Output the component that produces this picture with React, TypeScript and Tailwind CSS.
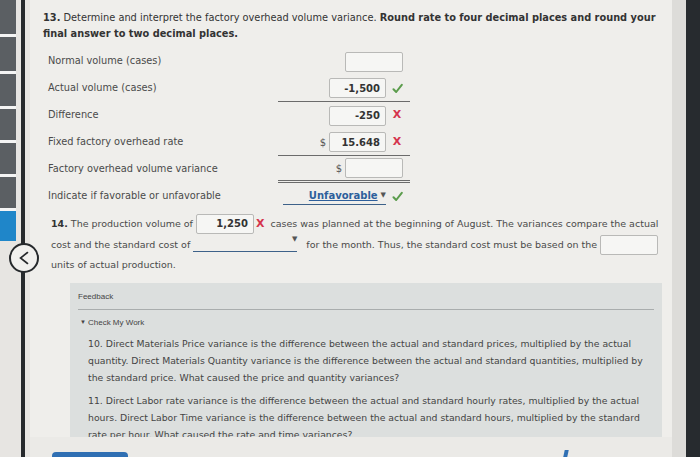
import type { ReactNode } from 'react';

const font = { fontFamily: '"DejaVu Sans", Verdana, sans-serif' };

function Box({ value, wide }: { value?: string; wide?: boolean }) {
  return (
    <span
      className={`flex h-[20px] items-center justify-end rounded-[2px] border border-[#b9b9b7] bg-[#f6f6f4] px-[5px] text-[10px] font-bold text-[#333] ${wide ? 'w-[58px]' : 'w-[57px]'}`}
    >
      {value}
    </span>
  );
}

function Check() {
  return (
    <span className="flex w-[16px] justify-center">
      <svg width="11" height="11" viewBox="0 0 11 11" fill="none" stroke="#5b9c4c" strokeWidth="2" strokeLinecap="round" strokeLinejoin="round">
        <path d="M1.5 6.2 4.2 9 9.8 1.8" />
      </svg>
    </span>
  );
}

function Cross() {
  return <span className="w-[16px] text-center text-[11px] font-bold text-[#d5344d]">X</span>;
}

function Row({
  label,
  line,
  children,
}: {
  label: string;
  line?: 'single' | 'double';
  children?: ReactNode;
}) {
  const border =
    line === 'single'
      ? 'border-b border-[#6b6b6b]'
      : line === 'double'
        ? 'border-b-[3px] border-double border-[#6b6b6b]'
        : '';
  return (
    <div className="flex h-[27px] items-center">
      <span className="w-[235px] pl-[5px] text-[9.8px] text-[#4a4a4a]">{label}</span>
      <span className={`flex h-full w-[132px] items-center justify-end gap-[3px] pr-[5px] ${border}`}>
        {children}
      </span>
    </div>
  );
}

function LeftRail() {
  const tabs = [34, 34, 32, 31, 31, 31];
  return (
    <div className="relative flex w-[30px] shrink-0 bg-[#e7e5e2]">
      <div className="flex w-[16px] flex-col">
        {tabs.map((h, i) => (
          <div key={i} className="flex flex-col">
            <div className="bg-[#5b5f63]" style={{ height: h }} />
            <div className="h-[3px] bg-[#f4f4f4]" />
          </div>
        ))}
        <div className="h-[30px] bg-[#1f86c9]" />
      </div>
      <div className="ml-[5px] w-[4px] bg-[#26292c]" />
      <div className="absolute top-[243px] left-[9px] flex size-[30px] items-center justify-center rounded-full border-[2px] border-[#26292c] bg-[#f1f0ee]">
        <svg width="12" height="14" viewBox="0 0 12 14" fill="none" stroke="#26292c" strokeWidth="1.6" strokeLinecap="round">
          <path d="M9.5 1.5 2.5 7l7 5.5" />
        </svg>
      </div>
    </div>
  );
}

export default function App() {
  return (
    <div className="flex h-[457px] w-[700px] overflow-hidden bg-[#efeeeb]" style={font}>
      <LeftRail />

      <div className="flex w-[642px] shrink-0 flex-col">
        <div className="pt-[10px] pl-[13px] text-[9.8px] leading-[16px] whitespace-nowrap text-[#333]">
          <b>13.</b> Determine and interpret the factory overhead volume variance.{' '}
          <b>Round rate to four decimal places and round your</b>
          <br />
          <b>final answer to two decimal places.</b>
        </div>

        <div className="mt-[6px] ml-[13px] flex flex-col">
          <Row label="Normal volume (cases)">
            <span className="mr-[2px]">
              <Box wide />
            </span>
          </Row>
          <Row label="Actual volume (cases)" line="single">
            <Box value="-1,500" />
            <Check />
          </Row>
          <Row label="Difference">
            <Box value="-250" />
            <Cross />
          </Row>
          <Row label="Fixed factory overhead rate" line="single">
            <span className="text-[10px] text-[#555]">$</span>
            <Box value="15.648" />
            <Cross />
          </Row>
          <Row label="Factory overhead volume variance" line="double">
            <span className="text-[10px] text-[#555]">$</span>
            <span className="mr-[2px]">
              <Box wide />
            </span>
          </Row>
          <Row label="Indicate if favorable or unfavorable">
            <span className="flex w-[103px] items-center justify-end border-b-[1.5px] border-[#3d6189] pb-[1px]">
              <span className="text-[10px] font-bold text-[#2d5f9b] underline">Unfavorable</span>
              <span className="ml-[3px] text-[7px] text-[#555]">▼</span>
            </span>
            <Check />
          </Row>
        </div>

        <div className="mt-[4px] pl-[21px] text-[9.5px] leading-[20.5px] whitespace-nowrap text-[#4a4a4a]">
          <div className="flex items-center">
            <b className="text-[#333]">14.</b>&nbsp;The production volume of&nbsp;
            <Box value="1,250" wide />
            <span className="ml-[2px]">
              <Cross />
            </span>
            &nbsp;&nbsp;cases was planned at the beginning of August. The variances compare the actual
          </div>
          <div className="flex items-center">
            cost and the standard cost of&nbsp;
            <span className="flex h-[15px] w-[104px] items-end justify-end border-b-[1.5px] border-[#3d6189]">
              <span className="mb-[2px] text-[7px] text-[#555]">▼</span>
            </span>
            <span className="ml-[9px]">for the month. Thus, the standard cost must be based on the</span>
            <span className="ml-[3px]">
              <Box wide />
            </span>
          </div>
          <div>units of actual production.</div>
        </div>

        <div className="mt-[7px] mr-[10px] ml-[40px] h-[154px] shrink-0 overflow-hidden bg-[#dcdfde] px-[8px]">
          <div
            className="pt-[8px] text-[8px] text-[#444]"
            style={{ fontFamily: '"Liberation Sans", Arial, sans-serif' }}
          >
            Feedback
          </div>
          <div className="mt-[6px] border-t border-[#a9adad]" />
          <div
            className="mt-[7px] flex items-center gap-[2px] pl-[2px] text-[8px] text-[#444]"
            style={{ fontFamily: '"Liberation Sans", Arial, sans-serif' }}
          >
            <span className="text-[6px]">▼</span>Check My Work
          </div>
          <div className="mt-[6px] pl-[10px] text-[9.3px] leading-[17px] whitespace-nowrap text-[#444]">
            <p>
              10. Direct Materials Price variance is the difference between the actual and standard prices, multiplied by the actual
              <br />
              quantity. Direct Materials Quantity variance is the difference between the actual and standard quantities, multiplied by
              <br />
              the standard price. What caused the price and quantity variances?
            </p>
            <p className="mt-[6px]">
              11. Direct Labor rate variance is the difference between the actual and standard hourly rates, multiplied by the actual
              <br />
              hours. Direct Labor Time variance is the difference between the actual and standard hours, multiplied by the standard
              <br />
              rate per hour. What caused the rate and time variances?
            </p>
          </div>
        </div>

        <div className="flex flex-1 items-end bg-[#ebeae7]">
          <div className="ml-[22px] h-[5px] w-[76px] rounded-t-[4px] bg-[#2f6fb3]" />
          <div className="ml-[436px] h-[7px] w-[4px] -skew-x-12 bg-[#2f6fb3]" />
        </div>
      </div>

      <div className="w-[14px] shrink-0 bg-[#dddcd9]" />
      <div className="flex-1 bg-[#272b2f]" />
    </div>
  );
}
